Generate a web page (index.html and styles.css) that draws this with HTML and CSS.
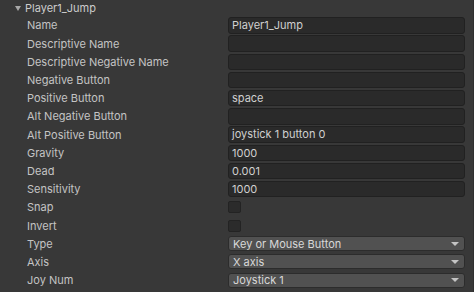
FILE: index.html
```html
<!DOCTYPE html>
<html lang="en">

<head>
    <meta charset="UTF-8">
    <title>Input Manager - Player1_Jump</title>
    <link rel="stylesheet" href="styles.css">
</head>

<body>
    <div class="inspector">
        <!-- Foldout header -->
        <div class="foldout">
            <span class="arrow"></span>
            <span>Player1_Jump</span>
        </div>

        <!-- Properties -->
        <div class="rows">
            <div class="row"><span class="label">Name</span><div class="field">Player1_Jump</div></div>
            <div class="row"><span class="label">Descriptive Name</span><div class="field"></div></div>
            <div class="row"><span class="label">Descriptive Negative Name</span><div class="field"></div></div>
            <div class="row"><span class="label">Negative Button</span><div class="field"></div></div>
            <div class="row"><span class="label">Positive Button</span><div class="field">space</div></div>
            <div class="row"><span class="label">Alt Negative Button</span><div class="field"></div></div>
            <div class="row"><span class="label">Alt Positive Button</span><div class="field">joystick 1 button 0</div></div>
            <div class="row"><span class="label">Gravity</span><div class="field">1000</div></div>
            <div class="row"><span class="label">Dead</span><div class="field">0.001</div></div>
            <div class="row"><span class="label">Sensitivity</span><div class="field">1000</div></div>
            <div class="row"><span class="label">Snap</span><div class="checkbox"></div></div>
            <div class="row"><span class="label">Invert</span><div class="checkbox"></div></div>
            <div class="row"><span class="label">Type</span><div class="dropdown">Key or Mouse Button<span class="caret"></span></div></div>
            <div class="row"><span class="label">Axis</span><div class="dropdown">X axis<span class="caret"></span></div></div>
            <div class="row"><span class="label">Joy Num</span><div class="dropdown">Joystick 1<span class="caret"></span></div></div>
        </div>
    </div>
</body>

</html>
```
FILE: styles.css
```css
body {
    margin: 0;
    padding: 0;
    background-color: #383838;
    font-family: Inter, "Noto Sans", sans-serif;
    font-size: 11px;
    color: #c4c4c4;
}

.inspector {
    width: 474px;
    height: 292px;
    border-right: 1px solid #2f2f2f;
    box-sizing: border-box;
    overflow: hidden;
}

/* Foldout */

.foldout {
    display: flex;
    align-items: center;
    height: 16.4px;
    padding-left: 15px;
    color: #cccccc;
}

.foldout .arrow {
    width: 0;
    height: 0;
    border-left: 3px solid transparent;
    border-right: 3px solid transparent;
    border-top: 5px solid #a8a8a8;
    margin-right: 4px;
}

/* Rows */

.row {
    display: grid;
    grid-template-columns: 201px 1fr;
    align-items: center;
    height: 18.2px;
    padding-left: 27px;
    padding-right: 8px;
}

.label {
    white-space: nowrap;
}

.field {
    height: 16.4px;
    line-height: 14.4px;
    box-sizing: border-box;
    padding: 0 3px;
    background-color: #2a2a2a;
    border: 1px solid #212121;
    border-radius: 3px;
    color: #d0d0d0;
}

.checkbox {
    width: 13px;
    height: 12px;
    box-sizing: border-box;
    background-color: #2b2b2b;
    border: 1px solid #232323;
    border-radius: 2px;
}

.dropdown {
    display: flex;
    justify-content: space-between;
    align-items: center;
    height: 15px;
    box-sizing: border-box;
    padding: 0 5px 0 4px;
    background-color: #515151;
    border: 1px solid #2c2c2c;
    border-radius: 3px;
    color: #d8d8d8;
}

.dropdown .caret {
    width: 0;
    height: 0;
    border-left: 4px solid transparent;
    border-right: 4px solid transparent;
    border-top: 4px solid #c4c4c4;
}
```
